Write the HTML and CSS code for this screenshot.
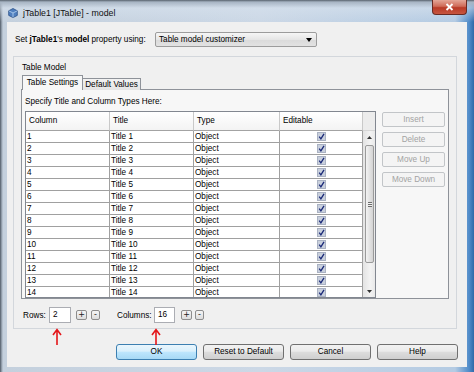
FILE: index.html
```html
<!DOCTYPE html>
<html lang="en">
<head>
  <meta charset="UTF-8" />
  <title>jTable1 [JTable] - model</title>
  <link rel="stylesheet" href="styles.css">
</head>
<body>
  <svg class="defs" width="0" height="0">
    <symbol id="chk" viewBox="0 0 9 9">
      <rect x="0.5" y="0.5" width="8" height="8" fill="#c9d0dd" stroke="#aab2c3"/>
      <path d="M2.2 4.6 L3.9 6.8 L7 1.8" fill="none" stroke="#1b2a78" stroke-width="1.3"/>
    </symbol>
  </svg>

  <div class="window">
    <div class="titlebar">
      <svg class="app-icon" width="10" height="10" viewBox="0 0 10 10">
        <path d="M5 0.5 L9.3 2.8 L9.3 7.4 L5 9.6 L0.7 7.4 L0.7 2.8 Z" fill="#4f7fbf" stroke="#2a4f86" stroke-width="0.8"/>
        <path d="M0.9 2.9 L5 5 L9.1 2.9 M5 5 L5 9.4" fill="none" stroke="#b9d4f2" stroke-width="0.8"/>
      </svg>
      <span class="title">jTable1 [JTable] - model</span>
      <div class="close">
        <svg width="9" height="8" viewBox="0 0 9 8">
          <path d="M1.5 1 L7.5 7 M7.5 1 L1.5 7" stroke="#fff" stroke-width="1.8"/>
        </svg>
      </div>
    </div>

    <div class="client">
      <div class="prop-row">
        <span class="prop-label">Set <b>jTable1</b>'s <b>model</b> property using:</span>
        <div class="combo">
          <span>Table model customizer</span>
          <svg width="6" height="4" viewBox="0 0 6 4"><path d="M0 0 H6 L3 4 Z" fill="#000"/></svg>
        </div>
      </div>

      <div class="group">
        <div class="group-title">Table Model</div>
        <div class="tabs">
          <div class="tab active">Table Settings</div>
          <div class="tab">Default Values</div>
        </div>
        <div class="tab-pane">
          <div class="hint">Specify Title and Column Types Here:</div>
          <div class="pane-body">
            <div class="scroll">
              <div class="thead">
                <div class="th">Column</div>
                <div class="th">Title</div>
                <div class="th">Type</div>
                <div class="th">Editable</div>
              </div>
              <div class="corner"></div>
              <div class="tbody">
                <div class="tr"><div class="td">1</div><div class="td">Title 1</div><div class="td">Object</div><div class="td check"><svg><use href="#chk"/></svg></div></div>
                <div class="tr"><div class="td">2</div><div class="td">Title 2</div><div class="td">Object</div><div class="td check"><svg><use href="#chk"/></svg></div></div>
                <div class="tr"><div class="td">3</div><div class="td">Title 3</div><div class="td">Object</div><div class="td check"><svg><use href="#chk"/></svg></div></div>
                <div class="tr"><div class="td">4</div><div class="td">Title 4</div><div class="td">Object</div><div class="td check"><svg><use href="#chk"/></svg></div></div>
                <div class="tr"><div class="td">5</div><div class="td">Title 5</div><div class="td">Object</div><div class="td check"><svg><use href="#chk"/></svg></div></div>
                <div class="tr"><div class="td">6</div><div class="td">Title 6</div><div class="td">Object</div><div class="td check"><svg><use href="#chk"/></svg></div></div>
                <div class="tr"><div class="td">7</div><div class="td">Title 7</div><div class="td">Object</div><div class="td check"><svg><use href="#chk"/></svg></div></div>
                <div class="tr"><div class="td">8</div><div class="td">Title 8</div><div class="td">Object</div><div class="td check"><svg><use href="#chk"/></svg></div></div>
                <div class="tr"><div class="td">9</div><div class="td">Title 9</div><div class="td">Object</div><div class="td check"><svg><use href="#chk"/></svg></div></div>
                <div class="tr"><div class="td">10</div><div class="td">Title 10</div><div class="td">Object</div><div class="td check"><svg><use href="#chk"/></svg></div></div>
                <div class="tr"><div class="td">11</div><div class="td">Title 11</div><div class="td">Object</div><div class="td check"><svg><use href="#chk"/></svg></div></div>
                <div class="tr"><div class="td">12</div><div class="td">Title 12</div><div class="td">Object</div><div class="td check"><svg><use href="#chk"/></svg></div></div>
                <div class="tr"><div class="td">13</div><div class="td">Title 13</div><div class="td">Object</div><div class="td check"><svg><use href="#chk"/></svg></div></div>
                <div class="tr"><div class="td">14</div><div class="td">Title 14</div><div class="td">Object</div><div class="td check"><svg><use href="#chk"/></svg></div></div>
              </div>
              <div class="vscroll">
                <div class="sb-btn"><svg width="5" height="3" viewBox="0 0 5 3"><path d="M0 3 L2.5 0 L5 3 Z" fill="#333"/></svg></div>
                <div class="thumb"><span class="grip"></span></div>
                <div class="sb-track"></div>
                <div class="sb-btn"><svg width="5" height="3" viewBox="0 0 5 3"><path d="M0 0 L2.5 3 L5 0 Z" fill="#333"/></svg></div>
              </div>
            </div>
            <div class="side-buttons">
              <div class="btn-disabled">Insert</div>
              <div class="btn-disabled">Delete</div>
              <div class="btn-disabled">Move Up</div>
              <div class="btn-disabled">Move Down</div>
            </div>
          </div>
        </div>

        <div class="counts">
          <span class="count-label rows-label">Rows:</span>
          <div class="field rows-field">2</div>
          <div class="spin plus">+</div>
          <div class="spin minus">-</div>
          <span class="count-label cols-label">Columns:</span>
          <div class="field cols-field">16</div>
          <div class="spin plus">+</div>
          <div class="spin minus">-</div>
        </div>
      </div>

      <div class="actions">
        <div class="btn default">OK</div>
        <div class="btn">Reset to Default</div>
        <div class="btn">Cancel</div>
        <div class="btn">Help</div>
      </div>
    </div>

    <!-- annotation arrows drawn over the dialog -->
    <svg class="marks" width="474" height="372" viewBox="0 0 474 372">
      <path d="M57 345 V330 M53 335 L57 329.5 L61 335" fill="none" stroke="#e4161a" stroke-width="1.6"/>
      <path d="M156 345 V330 M152 335 L156 329.5 L160 335" fill="none" stroke="#e4161a" stroke-width="1.6"/>
    </svg>
  </div>
</body>
</html>
```

FILE: styles.css
```css
body {
  margin: 0;
  font-family: "Liberation Sans", Arial, sans-serif;
  font-size: 8.2px;
  color: #000;
}

.defs {
  position: absolute;
}

.window {
  position: relative;
  width: 474px;
  height: 372px;
  display: flex;
  flex-direction: column;
  overflow: hidden;
  background: linear-gradient(to right, #4b5561 0, #7d8996 1px, #c4d0dd 3px, #ccd8e6 55%, #b4cbe3 96%, #4f8bc9 99%, #2f6aa8 100%);
}

.titlebar {
  height: 22px;
  padding-top: 4px;
  box-sizing: border-box;
  display: flex;
  align-items: center;
  background: linear-gradient(#58626d 0, #a7b4c3 2px, rgba(214, 225, 237, 0.6) 8px, rgba(190, 206, 224, 0) 22px);
}

.app-icon {
  margin-left: 8px;
}

.title {
  margin-left: 5px;
  font-size: 8.8px;
  color: #111;
}

.close {
  align-self: flex-start;
  margin: -4px 7px 0 auto;
  width: 35px;
  height: 15px;
  box-sizing: border-box;
  border: 1px solid #6a2a22;
  border-top: none;
  border-radius: 0 0 4px 4px;
  background: linear-gradient(#e4a697, #cf6b58 45%, #b93a26 55%, #c75640);
  display: flex;
  align-items: center;
  justify-content: center;
}

.client {
  flex: 1;
  margin: 0 7px 5px;
  background: #f0f0f0;
}

.prop-row {
  margin: 10px 0 0 8px;
  height: 15px;
  display: flex;
  align-items: center;
}

.prop-label {
  width: 140px;
}

.combo {
  width: 162px;
  height: 15px;
  box-sizing: border-box;
  border: 1px solid #9c9c9c;
  border-radius: 2px;
  background: linear-gradient(#f6f6f6, #e6e6e6 50%, #dadada 51%, #e2e2e2);
  display: flex;
  align-items: center;
  justify-content: space-between;
  padding: 0 4px 0 3px;
}

.group {
  margin: 9px 0 0 6px;
  width: 444px;
  box-sizing: border-box;
  border: 1px solid #d3d7dc;
  padding: 4px 7px 5px;
}

.group-title {
  height: 14px;
  line-height: 14px;
  padding-left: 1px;
}

.tabs {
  display: flex;
  align-items: flex-end;
  height: 15px;
  margin-left: 1px;
}

.tab {
  height: 12px;
  line-height: 11px;
  box-sizing: border-box;
  border: 1px solid #8e9299;
  border-bottom: none;
  margin-left: -1px;
  width: 59px;
  text-align: center;
  background: linear-gradient(#f2f2f2, #e4e4e4);
}

.tab.active {
  position: relative;
  z-index: 1;
  height: 15px;
  line-height: 13px;
  width: 61px;
  margin-left: 0;
  background: #f7f7f7;
}

.tab-pane {
  margin-top: -1px;
  border: 1px solid #8e9299;
  background: #f7f7f7;
  padding: 3px 3px 0;
}

.hint {
  height: 18px;
  line-height: 18px;
}

.pane-body {
  display: flex;
  align-items: flex-start;
}

.scroll {
  width: 351px;
  height: 187px;
  box-sizing: border-box;
  border: 1px solid #828790;
  background: #fff;
  display: grid;
  grid-template-columns: 337px 12px;
  grid-template-rows: 19px 166px;
}

.thead,
.tr {
  display: grid;
  grid-template-columns: 84px 84px 86px 83px;
}

.th {
  box-sizing: border-box;
  border-right: 1px solid #c9c9c9;
  border-bottom: 1px solid #a3a3a3;
  background: linear-gradient(#ffffff, #f3f3f3);
  padding-left: 3px;
  line-height: 18px;
}

.corner {
  background: #ececec;
  border-bottom: 1px solid #d6d6d6;
}

.tbody {
  overflow: hidden;
}

.tr {
  height: 12px;
}

.td {
  box-sizing: border-box;
  border-right: 1px solid #a0a0a0;
  border-bottom: 1px solid #a0a0a0;
  padding-left: 1px;
  line-height: 11px;
  white-space: nowrap;
}

.td.check {
  display: flex;
  justify-content: center;
  align-items: center;
  padding: 0;
}

.td.check svg {
  width: 9px;
  height: 9px;
}

.vscroll {
  display: flex;
  flex-direction: column;
  background: linear-gradient(to right, #e3e3e3, #f3f3f3 60%, #e9e9e9);
}

.sb-btn {
  height: 12px;
  display: flex;
  align-items: center;
  justify-content: center;
}

.thumb {
  margin: 2px 1px 0 2px;
  height: 118px;
  box-sizing: border-box;
  border: 1px solid #9a9a9a;
  border-radius: 2px;
  background: linear-gradient(to right, #f3f3f3, #e3e3e3 50%, #d4d4d4);
  display: flex;
  align-items: center;
  justify-content: center;
}

.grip {
  width: 4px;
  height: 5px;
  border-top: 1px solid #6c6c6c;
  border-bottom: 1px solid #6c6c6c;
  box-sizing: border-box;
  background: linear-gradient(#f3f3f3 1px, #6c6c6c 1px, #6c6c6c 2px, #f3f3f3 2px);
}

.sb-track {
  flex: 1;
}

.side-buttons {
  margin: 1px 0 0 6px;
  width: 64px;
  display: flex;
  flex-direction: column;
  gap: 5px;
}

.btn-disabled {
  height: 15px;
  box-sizing: border-box;
  border: 1px solid #c2c5c8;
  border-radius: 2px;
  background: #f4f4f4;
  color: #a3a3a3;
  text-align: center;
  line-height: 13px;
}

.counts {
  margin: 8px 0 0 2px;
  height: 16px;
  display: flex;
  align-items: center;
}

.rows-label {
  width: 26px;
}

.cols-label {
  width: 37px;
  margin-left: 17px;
}

.field {
  height: 16px;
  box-sizing: border-box;
  border: 1px solid #abadb3;
  background: #fff;
  padding-left: 3px;
  line-height: 14px;
}

.rows-field {
  width: 22px;
}

.cols-field {
  width: 21px;
}

.spin {
  height: 10px;
  box-sizing: border-box;
  border: 1px solid #8d8d8d;
  border-radius: 2px;
  background: linear-gradient(#f5f5f5, #dcdcdc);
  font-family: "DejaVu Sans", sans-serif;
  font-size: 8px;
  line-height: 7px;
  text-align: center;
  color: #222;
}

.spin.plus {
  width: 11px;
  margin-left: 5px;
}

.spin.minus {
  width: 9px;
  margin-left: 4px;
}

.cols-field + .spin.plus {
  margin-left: 6px;
}

.cols-field + .spin.plus + .spin.minus {
  margin-left: 3px;
}

.actions {
  margin-top: 15px;
  padding-right: 9px;
  display: flex;
  justify-content: flex-end;
  gap: 6px;
}

.btn {
  width: 81px;
  height: 16px;
  box-sizing: border-box;
  border: 1px solid #707070;
  border-radius: 3px;
  background: linear-gradient(#f2f2f2, #ebebeb 45%, #dddddd 50%, #cfcfcf);
  text-align: center;
  line-height: 14px;
}

.btn.default {
  border-color: #3c7fb1;
  background: linear-gradient(#eaf6fd, #d9f0fc 45%, #bee6fd 50%, #a7d9f5);
}

.marks {
  position: absolute;
  left: 0;
  top: 0;
  pointer-events: none;
}
```
